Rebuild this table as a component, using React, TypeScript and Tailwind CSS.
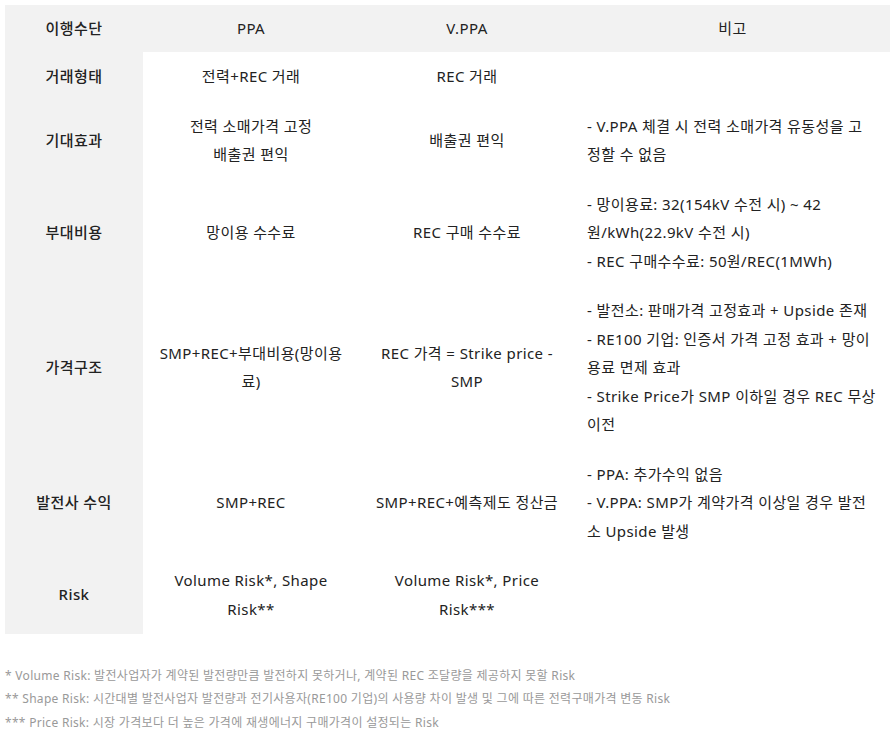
import React from "react";

const rows: { label: string; ppa: React.ReactNode; vppa: React.ReactNode; note: string[] }[] = [
  { label: "거래형태", ppa: "전력+REC 거래", vppa: "REC 거래", note: [] },
  {
    label: "기대효과",
    ppa: (
      <>
        전력 소매가격 고정
        <br />
        배출권 편익
      </>
    ),
    vppa: "배출권 편익",
    note: ["- V.PPA 체결 시 전력 소매가격 유동성을 고정할 수 없음"],
  },
  {
    label: "부대비용",
    ppa: "망이용 수수료",
    vppa: "REC 구매 수수료",
    note: [
      "- 망이용료: 32(154kV 수전 시) ~ 42원/kWh(22.9kV 수전 시)",
      "- REC 구매수수료: 50원/REC(1MWh)",
    ],
  },
  {
    label: "가격구조",
    ppa: "SMP+REC+부대비용(망이용료)",
    vppa: "REC 가격 = Strike price - SMP",
    note: [
      "- 발전소: 판매가격 고정효과 + Upside 존재",
      "- RE100 기업: 인증서 가격 고정 효과 + 망이용료 면제 효과",
      "- Strike Price가 SMP 이하일 경우 REC 무상이전",
    ],
  },
  {
    label: "발전사 수익",
    ppa: "SMP+REC",
    vppa: "SMP+REC+예측제도 정산금",
    note: ["- PPA: 추가수익 없음", "- V.PPA: SMP가 계약가격 이상일 경우 발전소 Upside 발생"],
  },
  {
    label: "Risk",
    ppa: "Volume Risk*, Shape Risk**",
    vppa: "Volume Risk*, Price Risk***",
    note: [],
  },
];

export default function App() {
  return (
    <div
      className="bg-white p-[5px] text-[15px] leading-[28.5px] tracking-[0.4px] text-[#222]"
      style={{ fontFamily: '"Noto Sans", "Noto Sans CJK KR", sans-serif' }}
    >
      <table className="w-[885px] table-fixed border-collapse">
        <colgroup>
          <col className="w-[138px]" />
          <col className="w-[216px]" />
          <col className="w-[216px]" />
          <col className="w-[315px]" />
        </colgroup>
        <thead>
          <tr className="bg-[#f2f2f2]">
            <th className="px-3 py-[9px] text-center font-medium">이행수단</th>
            <th className="px-3 py-[9px] text-center font-normal">PPA</th>
            <th className="px-3 py-[9px] text-center font-normal">V.PPA</th>
            <th className="px-3 py-[9px] text-center font-normal">비고</th>
          </tr>
        </thead>
        <tbody>
          {rows.map((r) => (
            <tr key={r.label}>
              <td className="bg-[#f2f2f2] px-3 py-[10.5px] text-center align-middle font-medium">
                {r.label}
              </td>
              <td className="px-3 py-[10.5px] text-center align-middle">{r.ppa}</td>
              <td className="px-3 py-[10.5px] text-center align-middle">{r.vppa}</td>
              <td className="py-[10.5px] pl-3 pr-[14px] text-left align-middle">
                {r.note.map((n) => (
                  <div key={n}>{n}</div>
                ))}
              </td>
            </tr>
          ))}
        </tbody>
      </table>

      {/* footnotes */}
      <div className="mt-[30px] text-[12px] leading-[23.5px] tracking-[0.3px] text-[#999]">
        <p>* Volume Risk: 발전사업자가 계약된 발전량만큼 발전하지 못하거나, 계약된 REC 조달량을 제공하지 못할 Risk</p>
        <p>** Shape Risk: 시간대별 발전사업자 발전량과 전기사용자(RE100 기업)의 사용량 차이 발생 및 그에 따른 전력구매가격 변동 Risk</p>
        <p>*** Price Risk: 시장 가격보다 더 높은 가격에 재생에너지 구매가격이 설정되는 Risk</p>
      </div>
    </div>
  );
}
